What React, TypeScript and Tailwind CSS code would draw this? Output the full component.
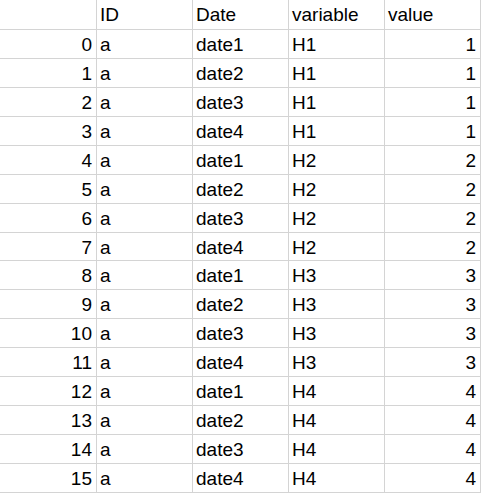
const headers = ["", "ID", "Date", "variable", "value"];

const rows = Array.from({ length: 16 }, (_, i) => ({
  idx: i,
  id: "a",
  date: `date${(i % 4) + 1}`,
  variable: `H${Math.floor(i / 4) + 1}`,
  value: Math.floor(i / 4) + 1,
}));

function Cell({ children, right, first }: { children?: React.ReactNode; right?: boolean; first?: boolean }) {
  return (
    <div
      className={`border-r border-b border-[#d4d4d4] pt-[1px] leading-[28px] whitespace-nowrap overflow-hidden ${
        right ? "text-right pr-[4px]" : "pl-[3px]"
      } ${first ? "w-[97px]" : "w-[96px]"}`}
    >
      {children}
    </div>
  );
}

export default function App() {
  return (
    <div className="w-[481px] h-[494px] bg-white text-black overflow-hidden text-[19px] font-['Liberation_Sans',Arial,sans-serif]">
      {/* header row */}
      <div className="flex h-[30px]">
        {headers.map((h, i) => (
          <Cell key={i} first={i === 0}>
            {h}
          </Cell>
        ))}
      </div>
      {rows.map((r) => (
        <div key={r.idx} className={`flex ${r.idx === 7 ? "h-[28px]" : "h-[29px]"}`}>
          <Cell first right>
            {r.idx}
          </Cell>
          <Cell>{r.id}</Cell>
          <Cell>{r.date}</Cell>
          <Cell>{r.variable}</Cell>
          <Cell right>{r.value}</Cell>
        </div>
      ))}
    </div>
  );
}
